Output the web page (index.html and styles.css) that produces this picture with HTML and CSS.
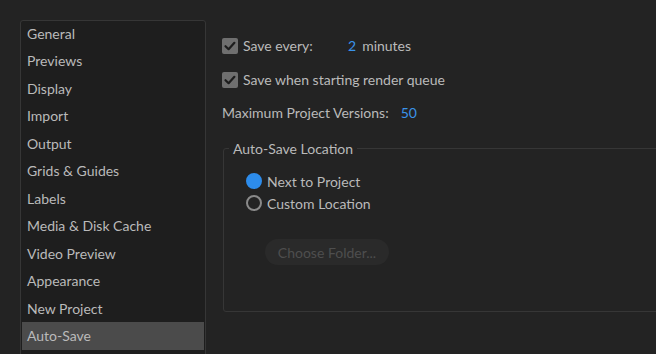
FILE: index.html
```html
<!DOCTYPE html>
<html lang="en">
    <head>
        <meta charset="UTF-8">
        <title>Preferences - Auto-Save</title>
        <link rel="stylesheet" href="styles.css">
    </head>
    <body>
        <div class="prefs">
            <ul class="sidebar">
                <li>General</li>
                <li>Previews</li>
                <li>Display</li>
                <li>Import</li>
                <li>Output</li>
                <li>Grids &amp; Guides</li>
                <li>Labels</li>
                <li>Media &amp; Disk Cache</li>
                <li>Video Preview</li>
                <li>Appearance</li>
                <li>New Project</li>
                <li class="selected">Auto-Save</li>
            </ul>

            <div class="pane">
                <div class="row">
                    <span class="checkbox">
                        <svg width="16" height="16" viewBox="0 0 16 16"><path d="M3.5 8.2 L6.6 11.2 L12.4 4.8" fill="none" stroke="#1d1d1d" stroke-width="2.2" stroke-linecap="round" stroke-linejoin="round"/></svg>
                    </span>
                    <span class="label every">Save every:</span>
                    <span class="value">2</span>
                    <span class="label">minutes</span>
                </div>
                <div class="row">
                    <span class="checkbox">
                        <svg width="16" height="16" viewBox="0 0 16 16"><path d="M3.5 8.2 L6.6 11.2 L12.4 4.8" fill="none" stroke="#1d1d1d" stroke-width="2.2" stroke-linecap="round" stroke-linejoin="round"/></svg>
                    </span>
                    <span class="label">Save when starting render queue</span>
                </div>
                <div class="row">
                    <span class="label">Maximum Project Versions:</span>
                    <span class="value versions">50</span>
                </div>

                <fieldset class="group">
                    <legend>Auto-Save Location</legend>
                    <div class="group-body">
                        <div class="radio-row">
                            <span class="radio on"></span>
                            <span class="label">Next to Project</span>
                        </div>
                        <div class="radio-row">
                            <span class="radio"></span>
                            <span class="label">Custom Location</span>
                        </div>
                        <button class="folder-button" disabled>Choose Folder...</button>
                    </div>
                </fieldset>
            </div>
        </div>
    </body>
</html>
```

FILE: styles.css
```css
* {
    margin: 0;
    padding: 0;
    box-sizing: border-box;
}

html, body {
    height: 100%;
    overflow: hidden;
}

body {
    background-color: #232323;
    color: #bababa;
    font-family: 'Lato', sans-serif;
    font-size: 14px;
}

.prefs {
    display: flex;
    padding: 20px 0 0 20px;
    height: 100%;
}

.sidebar {
    list-style: none;
    width: 186px;
    height: 360px;
    flex: 0 0 auto;
    background-color: #1e1e1e;
    border: 1px solid #363636;
    border-radius: 3px;
    padding: 0 1px;
}

.sidebar li {
    height: 27.5px;
    line-height: 27.5px;
    padding-left: 5px;
    white-space: nowrap;
}

.sidebar li:first-child {
    margin-top: -1.5px;
}

.sidebar li.selected {
    background-color: #4b4b4b;
}

.pane {
    flex: 1 1 auto;
    padding: 17px 0 0 16px;
    margin-right: -20px;
}

.row {
    display: flex;
    align-items: center;
    height: 17px;
    margin-bottom: 17px;
}

.row:nth-child(3) {
    margin-top: -1px;
}

.checkbox {
    width: 16px;
    height: 16px;
    background-color: #6f6f6f;
    border-radius: 2px;
    margin-right: 5px;
    display: flex;
}

.every {
    width: 105px;
}

.value {
    color: #3a93ea;
    margin-right: 6px;
}

.versions {
    margin-left: 12px;
}

.group {
    margin: 19px 0 0 1px;
    height: 172px;
    border: 1px solid #363636;
    border-radius: 3px;
    padding: 0;
}

.group legend {
    margin-left: 5px;
    padding: 0 4px;
}

.group-body {
    padding: 13px 0 0 22px;
}

.radio-row {
    display: flex;
    align-items: center;
    height: 22px;
}

.radio {
    width: 16px;
    height: 16px;
    border-radius: 50%;
    border: 2px solid #8a8a8a;
    margin-right: 5px;
}

.radio.on {
    background-color: #2d8ceb;
    border-color: #2d8ceb;
}

.folder-button {
    margin: 25px 0 0 19px;
    width: 124px;
    height: 26px;
    border: none;
    border-radius: 13px;
    background-color: #2a2a2a;
    color: #4e4e4e;
    font-family: inherit;
    font-size: 14px;
}
```
